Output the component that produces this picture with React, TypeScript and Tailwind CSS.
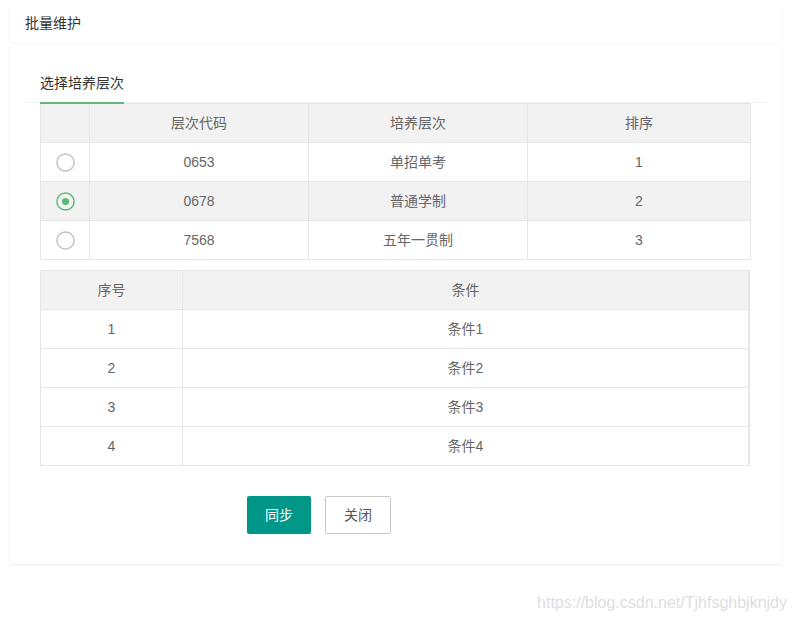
import React from "react";

const levels = [
  { code: "0653", name: "单招单考", order: 1, checked: false },
  { code: "0678", name: "普通学制", order: 2, checked: true },
  { code: "7568", name: "五年一贯制", order: 3, checked: false },
];

const conditions = [
  { no: 1, text: "条件1" },
  { no: 2, text: "条件2" },
  { no: 3, text: "条件3" },
  { no: 4, text: "条件4" },
];

function Radio({ checked }: { checked: boolean }) {
  const color = checked ? "#5FB878" : "#c2c2c2";
  return (
    <svg width="19" height="19" viewBox="0 0 19 19" className="inline-block align-middle">
      <circle cx="9.5" cy="9.5" r="8.6" fill="none" stroke={color} strokeWidth="1.5" />
      {checked && <circle cx="9.5" cy="9.5" r="3.6" fill={color} />}
    </svg>
  );
}

const cell = "border border-[#e6e6e6] py-[9px] px-[15px] leading-[20px] text-center";

export default function App() {
  return (
    <div className="min-h-[623px] bg-white pt-[2px] text-[14px] text-[#666] font-[family-name:'Liberation_Sans','Noto_Sans_CJK_SC',sans-serif]">
      {/* Card */}
      <div className="ml-[10px] w-[771px] bg-white rounded-[2px] shadow-[0_1px_2px_0_rgba(0,0,0,0.08)]">
        <div className="h-[42px] leading-[42px] px-[15px] border-b border-[#f6f6f6] text-[#333]">
          批量维护
        </div>

        <div className="px-[15px] pt-[19px] pb-[30px]">
          {/* Tab */}
          <div className="h-[40px] border-b border-[#f2f2f2] pl-[15px] flex">
            <div className="h-[41px] leading-[40px] text-[#333] border-b-2 border-[#5FB878] -mb-px box-border">
              选择培养层次
            </div>
          </div>

          <div className="px-[15px]">
            {/* Level table */}
            <table className="w-[710px] table-fixed border-collapse">
              <colgroup>
                <col className="w-[49px]" />
                <col className="w-[219px]" />
                <col className="w-[219px]" />
                <col className="w-[223px]" />
              </colgroup>
              <thead>
                <tr className="bg-[#f2f2f2]">
                  <th className={`${cell} font-normal`}></th>
                  <th className={`${cell} font-normal`}>层次代码</th>
                  <th className={`${cell} font-normal`}>培养层次</th>
                  <th className={`${cell} font-normal`}>排序</th>
                </tr>
              </thead>
              <tbody>
                {levels.map((row) => (
                  <tr key={row.code} className={row.checked ? "bg-[#f2f2f2]" : "bg-white"}>
                    <td className="border border-[#e6e6e6] h-[39px] text-center p-0">
                      <Radio checked={row.checked} />
                    </td>
                    <td className={cell}>{row.code}</td>
                    <td className={cell}>{row.name}</td>
                    <td className={cell}>{row.order}</td>
                  </tr>
                ))}
              </tbody>
            </table>

            {/* Condition table */}
            <div className="mt-[10px] w-[710px] border-r border-[#e6e6e6]">
              <table className="w-[708px] table-fixed border-collapse">
                <colgroup>
                  <col className="w-[142px]" />
                  <col className="w-[566px]" />
                </colgroup>
                <thead>
                  <tr className="bg-[#f2f2f2]">
                    <th className={`${cell} font-normal`}>序号</th>
                    <th className={`${cell} font-normal`}>条件</th>
                  </tr>
                </thead>
                <tbody>
                  {conditions.map((c) => (
                    <tr key={c.no}>
                      <td className={cell}>{c.no}</td>
                      <td className={cell}>{c.text}</td>
                    </tr>
                  ))}
                </tbody>
              </table>
            </div>
          </div>

          {/* Actions */}
          <div className="mt-[30px] pl-[222px] flex gap-[14px]">
            <button className="h-[38px] px-[18px] bg-[#009688] text-white rounded-[2px]">
              同步
            </button>
            <button className="h-[38px] px-[18px] bg-white text-[#555] border border-[#c9c9c9] rounded-[2px]">
              关闭
            </button>
          </div>
        </div>
      </div>

      <div className="mt-[29px] pr-[8px] text-right text-[16px] leading-[20px] text-[#dedede]">
        https://blog.csdn.net/Tjhfsghbjknjdy
      </div>
    </div>
  );
}
